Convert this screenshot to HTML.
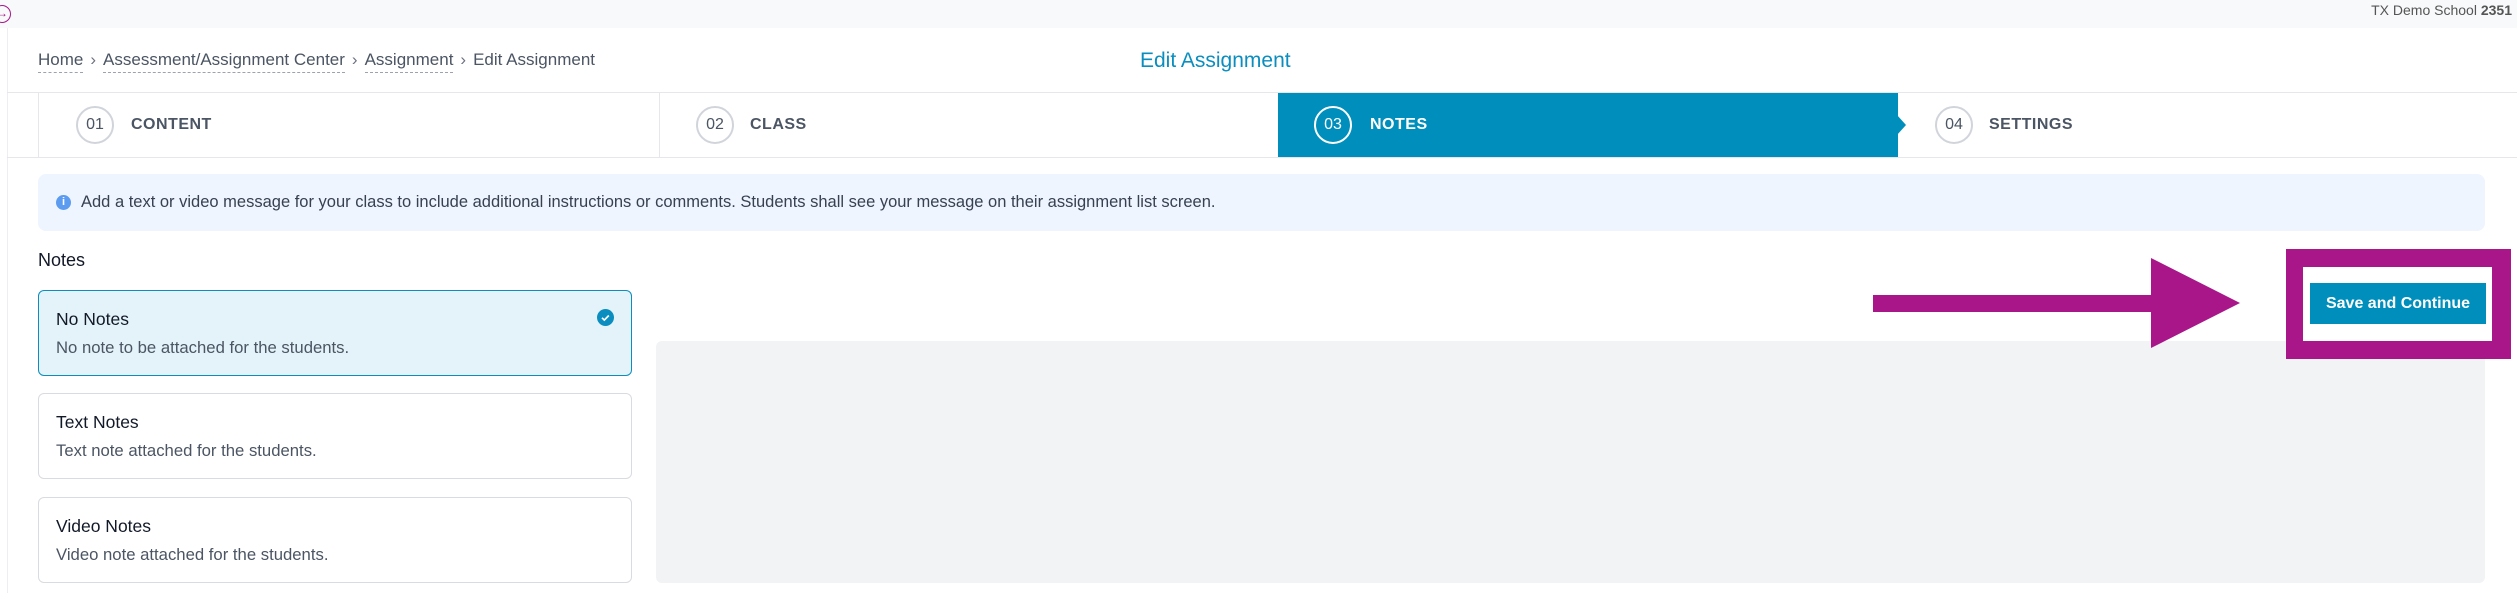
<!DOCTYPE html>
<html><head><meta charset="utf-8"><style>
*{box-sizing:border-box;margin:0;padding:0}
body{width:2517px;height:593px;position:relative;overflow:hidden;background:#fff;font-family:"Liberation Sans",sans-serif;color:#1f2937}
.a{position:absolute}
.top{left:0;top:0;width:2517px;height:28px;background:#f8f9fb}
.bc{top:50px;font-size:17px;color:#4b5563}
.bc span.l{border-bottom:1px dashed #9ca3af;padding-bottom:3px}
.bc .s{margin:0 7px;color:#6b7280}
.circ{width:38px;height:38px;border:2px solid #d1d5db;border-radius:50%;font-size:16px;color:#4b5563;display:flex;align-items:center;justify-content:center;top:106px}
.lbl{top:116px;font-size:16px;font-weight:bold;color:#4b5563;letter-spacing:0.5px}
.card{left:38px;width:594px;height:86px;border:1.5px solid #d8dbe0;border-radius:6px;background:#fff}
.card .t{position:absolute;left:17px;top:18px;font-size:17.5px;color:#111827}
.card .d{position:absolute;left:17px;top:47px;font-size:16.7px;color:#4b5563}
</style></head><body>
<div class="a top"></div>
<div class="a" style="left:-7px;top:5px;width:18px;height:18px;border:1.5px solid #a8168a;border-radius:50%;color:#a8168a;font-size:12px;line-height:15px;text-align:right;padding-right:2px">→</div>
<div class="a" style="right:5px;top:2px;font-size:14px;color:#555">TX Demo School <b>2351</b></div>
<div class="a" style="left:7px;top:28px;width:1px;height:565px;background:#eceef1"></div>
<div class="a bc" style="left:38px"><span class="l">Home</span><span class="s">›</span><span class="l">Assessment/Assignment Center</span><span class="s">›</span><span class="l">Assignment</span><span class="s">›</span>Edit Assignment</div>
<div class="a" style="left:1140px;top:49px;font-size:21px;color:#0b8ebf">Edit Assignment</div>
<div class="a" style="left:7px;top:92px;width:2510px;height:66px;border-top:1.5px solid #e5e7eb;border-bottom:1.5px solid #e5e7eb"></div>
<div class="a" style="left:38px;top:93px;width:1px;height:64px;background:#e5e7eb"></div>
<div class="a" style="left:659px;top:93px;width:1px;height:64px;background:#e5e7eb"></div>
<div class="a" style="left:1278px;top:93px;width:620px;height:64px;background:#008fbc"></div>
<svg class="a" style="left:1897px;top:115px" width="12" height="20"><polygon points="0,0 9,10 0,20" fill="#008fbc"/></svg>
<div class="a circ" style="left:76px">01</div><div class="a lbl" style="left:131px">CONTENT</div>
<div class="a circ" style="left:696px">02</div><div class="a lbl" style="left:750px">CLASS</div>
<div class="a circ" style="left:1314px;border-color:#fff;color:#fff">03</div><div class="a lbl" style="left:1370px;color:#fff">NOTES</div>
<div class="a circ" style="left:1935px">04</div><div class="a lbl" style="left:1989px">SETTINGS</div>
<div class="a" style="left:38px;top:174px;width:2447px;height:57px;background:#eef5fe;border-radius:8px"></div>
<div class="a" style="left:56px;top:195px;width:15px;height:15px;border-radius:50%;background:#5b9bf0;color:#fff;font-size:11px;text-align:center;line-height:15px;font-weight:bold">i</div>
<div class="a" style="left:81px;top:193px;font-size:16.5px;color:#374151">Add a text or video message for your class to include additional instructions or comments. Students shall see your message on their assignment list screen.</div>
<div class="a" style="left:38px;top:250px;font-size:18px;color:#111827">Notes</div>
<div class="a card" style="top:290px;background:#e4f3f9;border-color:#0b8ebf"><div class="t">No Notes</div><div class="d">No note to be attached for the students.</div>
<div class="a" style="left:558px;top:18px;width:17px;height:17px;border-radius:50%;background:#0b8ebf"><svg width="17" height="17"><path d="M5 8.8l2.3 2.3 4.5-4.6" stroke="#fff" stroke-width="1.7" fill="none"/></svg></div></div>
<div class="a card" style="top:393px"><div class="t">Text Notes</div><div class="d">Text note attached for the students.</div></div>
<div class="a card" style="top:497px"><div class="t">Video Notes</div><div class="d">Video note attached for the students.</div></div>
<div class="a" style="left:656px;top:341px;width:1829px;height:242px;background:#f2f3f5;border-radius:6px"></div>
<div class="a" style="left:2286px;top:249px;width:225px;height:110px;background:#a8168a"></div>
<div class="a" style="left:2303px;top:267px;width:189px;height:74px;background:#fff"></div>
<div class="a" style="left:2310px;top:283px;width:176px;height:41px;background:#008fbc;color:#fff;font-size:16px;font-weight:bold;text-align:center;line-height:41px">Save and Continue</div>
<svg class="a" style="left:1873px;top:258px" width="370" height="92"><rect x="0" y="37" width="280" height="17" fill="#a8168a"/><polygon points="278,0 367,45 278,90" fill="#a8168a"/></svg>
</body></html>
